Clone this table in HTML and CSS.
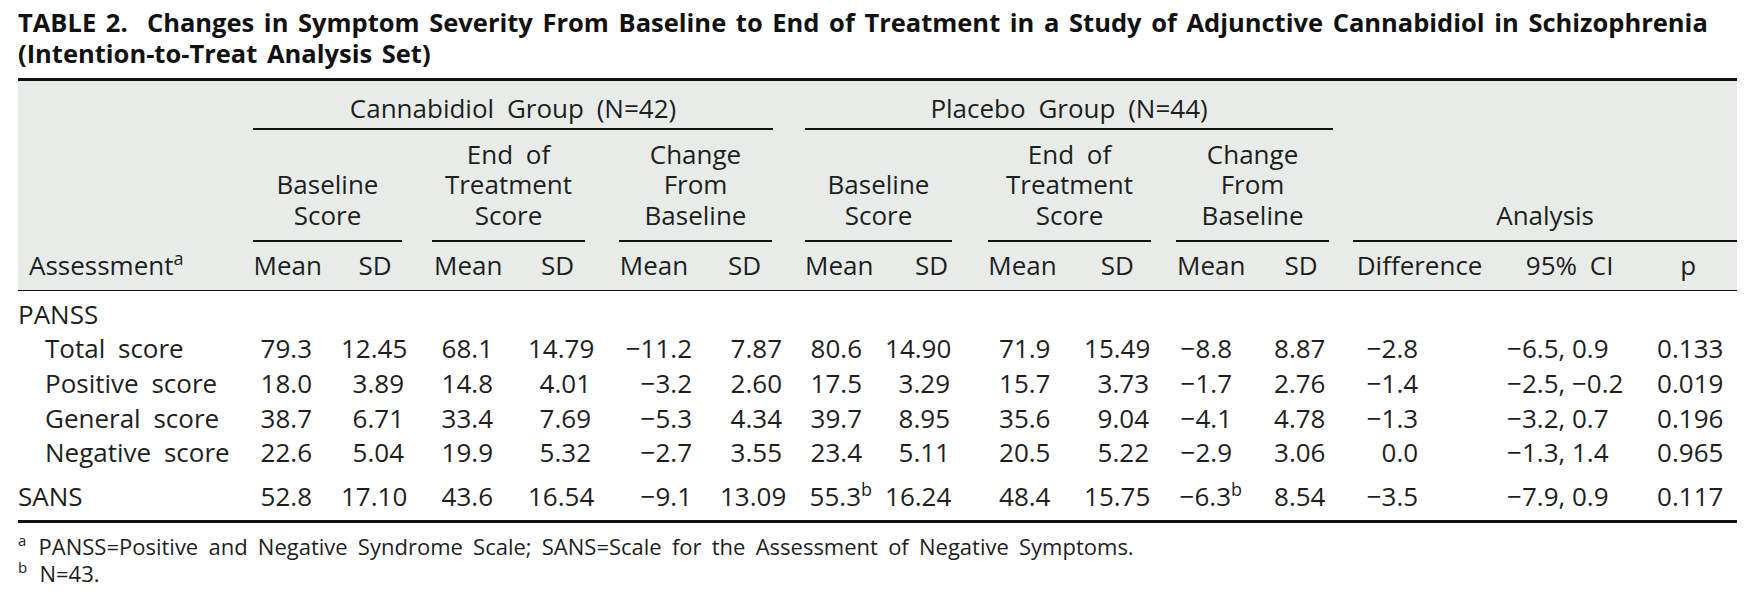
FILE: index.html
```html
<!DOCTYPE html>
<html>
<head>
<meta charset="utf-8">
<title>Table 2</title>
<link rel="stylesheet" href="styles.css">
</head>
<body>
<div class="page">
<h1 class="title">TABLE 2.&nbsp; Changes in Symptom Severity From Baseline to End of Treatment in a Study of Adjunctive Cannabidiol in Schizophrenia<br>(Intention-to-Treat Analysis Set)</h1>
<table class="t">
<colgroup>
<col class="c0"><col class="c1"><col class="c2"><col class="c3"><col class="c4"><col class="c5"><col class="c6"><col class="c7"><col class="c8"><col class="c9"><col class="c10"><col class="c11"><col class="c12"><col class="c13"><col class="c14"><col class="c15">
</colgroup>
<thead>
<tr class="g">
<th></th>
<th colspan="6" class="g1"><div>Cannabidiol Group (N=42)</div></th>
<th colspan="6" class="g2"><div>Placebo Group (N=44)</div></th>
<th colspan="3"></th>
</tr>
<tr class="s">
<th></th>
<th colspan="2" class="p1"><div>Baseline<br>Score</div></th>
<th colspan="2" class="p2"><div>End of<br>Treatment<br>Score</div></th>
<th colspan="2" class="p3"><div>Change<br>From<br>Baseline</div></th>
<th colspan="2" class="p4"><div>Baseline<br>Score</div></th>
<th colspan="2" class="p5"><div>End of<br>Treatment<br>Score</div></th>
<th colspan="2" class="p6"><div>Change<br>From<br>Baseline</div></th>
<th colspan="3" class="pa"><div>Analysis</div></th>
</tr>
<tr class="r h">
<th class="lab">Assessment<sup>a</sup></th>
<th>Mean</th><th>SD</th><th>Mean</th><th>SD</th><th>Mean</th><th>SD</th>
<th>Mean</th><th>SD</th><th>Mean</th><th>SD</th><th>Mean</th><th>SD</th>
<th>Difference</th><th>95% CI</th><th>p</th>
</tr>
</thead>
<tbody>
<tr class="r sec">
<td class="lab">PANSS</td><td></td><td></td><td></td><td></td><td></td><td></td><td></td><td></td><td></td><td></td><td></td><td></td><td></td><td></td><td></td>
</tr>
<tr class="r">
<td class="lab">Total score</td><td>79.3</td><td>12.45</td><td>68.1</td><td>14.79</td><td>−11.2</td><td>7.87</td><td>80.6</td><td>14.90</td><td>71.9</td><td>15.49</td><td>−8.8</td><td>8.87</td><td>−2.8</td><td>−6.5, 0.9</td><td>0.133</td>
</tr>
<tr class="r">
<td class="lab">Positive score</td><td>18.0</td><td>3.89</td><td>14.8</td><td>4.01</td><td>−3.2</td><td>2.60</td><td>17.5</td><td>3.29</td><td>15.7</td><td>3.73</td><td>−1.7</td><td>2.76</td><td>−1.4</td><td>−2.5, −0.2</td><td>0.019</td>
</tr>
<tr class="r">
<td class="lab">General score</td><td>38.7</td><td>6.71</td><td>33.4</td><td>7.69</td><td>−5.3</td><td>4.34</td><td>39.7</td><td>8.95</td><td>35.6</td><td>9.04</td><td>−4.1</td><td>4.78</td><td>−1.3</td><td>−3.2, 0.7</td><td>0.196</td>
</tr>
<tr class="r">
<td class="lab">Negative score</td><td>22.6</td><td>5.04</td><td>19.9</td><td>5.32</td><td>−2.7</td><td>3.55</td><td>23.4</td><td>5.11</td><td>20.5</td><td>5.22</td><td>−2.9</td><td>3.06</td><td>0.0</td><td>−1.3, 1.4</td><td>0.965</td>
</tr>
<tr class="r sec last">
<td class="lab">SANS</td><td>52.8</td><td>17.10</td><td>43.6</td><td>16.54</td><td>−9.1</td><td>13.09</td><td>55.3<sup>b</sup></td><td>16.24</td><td>48.4</td><td>15.75</td><td>−6.3<sup>b</sup></td><td>8.54</td><td>−3.5</td><td>−7.9, 0.9</td><td>0.117</td>
</tr>
</tbody>
</table>
<div class="notes">
<p><sup>a</sup> PANSS=Positive and Negative Syndrome Scale; SANS=Scale for the Assessment of Negative Symptoms.</p>
<p><sup>b</sup> N=43.</p>
</div>
</div>
</body>
</html>
```

FILE: styles.css
```css
body {
  margin: 0;
  background: #ffffff;
  color: #1e1e1e;
  font-family: "Open Sans", "DejaVu Sans", sans-serif;
}

.page {
  padding: 7px 19px 0 18px;
  width: 1719px;
}

.title {
  margin: 0 0 9px;
  font-size: 25.5px;
  font-weight: 700;
  line-height: 31px;
  word-spacing: 3px;
  color: #111111;
}

.t {
  width: 1719px;
  table-layout: fixed;
  border-collapse: separate;
  border-spacing: 0;
  border-top: 3px solid #111111;
  font-size: 26px;
}

.c0 { width: 217px; }
.c1 { width: 77px; }
.c2 { width: 92px; }
.c3 { width: 89px; }
.c4 { width: 98px; }
.c5 { width: 101px; }
.c6 { width: 90px; }
.c7 { width: 80px; }
.c8 { width: 88px; }
.c9 { width: 100px; }
.c10 { width: 99px; }
.c11 { width: 83px; }
.c12 { width: 87px; }
.c13 { width: 171px; }
.c14 { width: 155px; }
.c15 { width: 92px; }

thead tr { background: #e8ece9; }

thead th {
  font-weight: 400;
  line-height: 30.5px;
  padding: 0;
  vertical-align: bottom;
  white-space: nowrap;
  text-align: center;
  word-spacing: 6px;
}

.g th { padding-top: 11.65px; }
.g th div {
  border-bottom: 2px solid #111111;
  padding-bottom: 4.85px;
}
.g .g1 { padding-left: 18px; padding-right: 9px; }
.g .g2 { padding-left: 23px; }
.g .g2 div { margin-right: -14px; }

.s th { padding-top: 8.65px; }
.s th div {
  border-bottom: 2px solid #111111;
  padding-bottom: 9.85px;
}
.s .p1 { padding-left: 18px; padding-right: 2px; }
.s .p2 { padding-left: 28px; padding-right: 6px; }
.s .p3 { padding-left: 28px; padding-right: 10px; }
.s .p4 { padding-left: 23px; }
.s .p4 div { margin-right: -2px; }
.s .p5 { padding-left: 38px; }
.s .p5 div { margin-right: -2px; }
.s .p6 { padding-left: 27px; }
.s .p6 div { margin-right: -10px; }
.s .pa { padding-left: 34px; }

.h th {
  padding-top: 7.65px;
  padding-bottom: 9.85px;
  border-bottom: 1px solid #111111;
}
.h th.lab {
  text-align: left;
  padding-left: 11px;
}

tbody td {
  padding: 0;
  line-height: 34.6px;
  text-align: right;
  white-space: nowrap;
}
tbody tr:first-child td { padding-top: 5.9px; }
tbody tr.last td {
  padding-top: 8.7px;
  padding-bottom: 7px;
  border-bottom: 3px solid #111111;
}
tbody td.lab {
  text-align: left;
  padding-left: 27px;
  word-spacing: 6px;
}
tbody .sec td.lab { padding-left: 0; }

/* per-column offsets of the value blocks */
.r > td:nth-child(2) { padding-left: 22px; }
.r > td:nth-child(3) { padding-left: 29px; }
.r > td:nth-child(4) { padding-left: 33px; }
.r > td:nth-child(5) { padding-left: 35px; }
.r > td:nth-child(6) { padding-left: 31px; }
.r > td:nth-child(7) { padding-left: 28px; }
.r > td:nth-child(8) { padding-left: 24px; }
.r > td:nth-child(9) { padding-left: 23px; }
.r > td:nth-child(10) { padding-left: 49px; }
.r > td:nth-child(11) { padding-left: 34px; }
.r > td:nth-child(12) { padding-left: 29px; }
.r > td:nth-child(13) { padding-left: 42px; }
.r > td:nth-child(14) { padding-right: 72px; }
.r > td:nth-child(15) { padding-left: 17px; text-align: left; }
.r > td:nth-child(16) { padding-left: 12px; padding-right: 18px; }

/* Mean / SD header labels: left edges taken from the reference */
.h > th:nth-child(n+2) { text-align: left; }
.h > th:nth-child(2) { padding-left: 18.5px; }
.h > th:nth-child(3) { padding-left: 46.5px; }
.h > th:nth-child(4) { padding-left: 30px; }
.h > th:nth-child(5) { padding-left: 48px; }
.h > th:nth-child(6) { padding-left: 28.75px; }
.h > th:nth-child(7) { padding-left: 36px; }
.h > th:nth-child(8) { padding-left: 23px; }
.h > th:nth-child(9) { padding-left: 53px; }
.h > th:nth-child(10) { padding-left: 38.25px; }
.h > th:nth-child(11) { padding-left: 50.85px; }
.h > th:nth-child(12) { padding-left: 28px; }
.h > th:nth-child(13) { padding-left: 52.5px; }
.h > th:nth-child(14) { padding-left: 34px; padding-right: 4px; text-align: center; }
.h > th:nth-child(15) { padding-left: 17px; padding-right: 13px; text-align: center; }
.h > th:nth-child(16) { padding-left: 12px; padding-right: 18px; text-align: center; }

.t sup {
  font-size: 18px;
  line-height: 0;
  vertical-align: 10px;
}
.t td sup { margin-right: -10px; }

.notes {
  margin-top: 9.9px;
  font-size: 22px;
  line-height: 26.7px;
  word-spacing: 4.5px;
}
.notes p { margin: 0; }
.notes sup {
  font-size: 15px;
  line-height: 0;
  vertical-align: 9px;
  margin-right: 2px;
}
```
